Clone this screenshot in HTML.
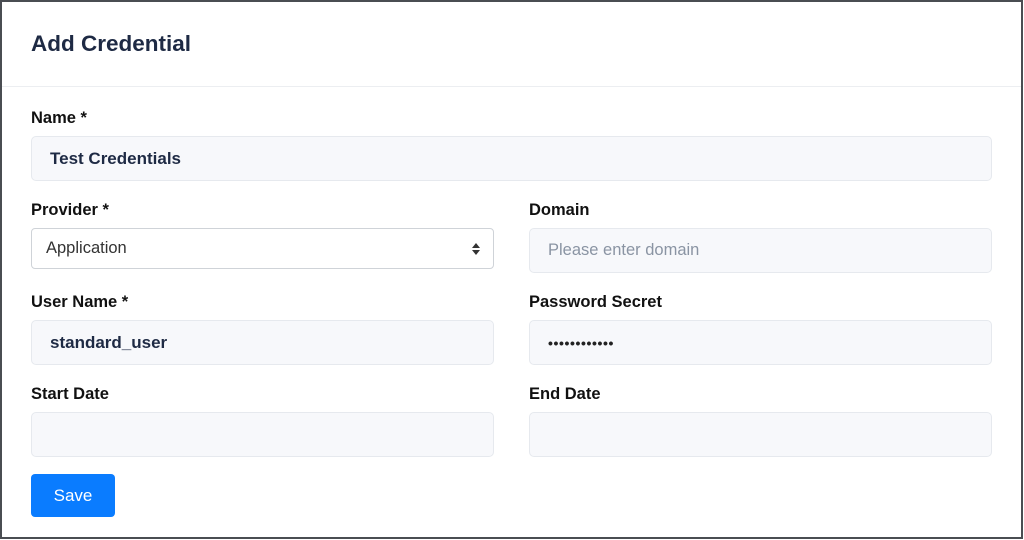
<!DOCTYPE html>
<html><head><style>
*{box-sizing:border-box;margin:0;padding:0}
body{width:1024px;height:540px;background:#fff;font-family:"Liberation Sans",sans-serif;position:relative;overflow:hidden}
.frame{position:absolute;left:0;top:0;width:1023px;height:539px;border:2px solid #4a4d52;background:#fff}
.hdr{position:absolute;left:2px;top:86px;width:1019px;height:1px;background:#eceef1}
h1{position:absolute;left:31px;top:31px;font-size:22.5px;font-weight:bold;color:#1e2a44}
.lbl{position:absolute;font-size:16.5px;font-weight:bold;color:#111;line-height:18px}
.in{position:absolute;background:#f7f8fb;border:1px solid #e6e9ee;border-radius:5px;height:45px;font-size:17px;padding-left:18px;display:flex;align-items:center;color:#1e2a44;font-weight:bold}
.sel{position:absolute;left:31px;top:228px;width:463px;height:41px;border:1px solid #cfd3d8;border-radius:4px;background:#fff;font-size:16.5px;color:#333;padding-left:14px;display:flex;align-items:center}
.btn{position:absolute;left:31px;top:474px;width:84px;height:43px;background:#0a7cff;border-radius:4px;color:#fff;font-size:17px;display:flex;align-items:center;justify-content:center}
</style></head><body>
<div class="frame"></div>
<h1>Add Credential</h1>
<div class="hdr"></div>
<div class="lbl" style="left:31px;top:109px">Name *</div>
<div class="in" style="left:31px;top:136px;width:961px">Test Credentials</div>
<div class="lbl" style="left:31px;top:201px">Provider *</div>
<div class="sel">Application<svg style="position:absolute;right:12px;top:13px" width="10" height="14" viewBox="0 0 10 14"><path d="M1 6L5 1L9 6Z M1 8L5 13L9 8Z" fill="#333"/></svg></div>
<div class="lbl" style="left:529px;top:201px">Domain</div>
<div class="in" style="left:529px;top:228px;width:463px;font-weight:normal;color:#8a94a3;font-size:16.5px">Please enter domain</div>
<div class="lbl" style="left:31px;top:293px">User Name *</div>
<div class="in" style="left:31px;top:320px;width:463px">standard_user</div>
<div class="lbl" style="left:529px;top:293px">Password Secret</div>
<div class="in" style="left:529px;top:320px;width:463px;font-size:14px;letter-spacing:0.6px;color:#222">••••••••••••</div>
<div class="lbl" style="left:31px;top:385px">Start Date</div>
<div class="in" style="left:31px;top:412px;width:463px"></div>
<div class="lbl" style="left:529px;top:385px">End Date</div>
<div class="in" style="left:529px;top:412px;width:463px"></div>
<div class="btn">Save</div>
</body></html>
